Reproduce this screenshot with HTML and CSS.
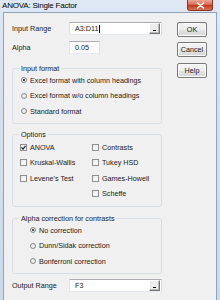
FILE: index.html
```html
<!DOCTYPE html>
<html>
<head>
<meta charset="utf-8">
<link rel="stylesheet" href="styles.css">
</head>
<body>
<div class="window">
  <div class="titlebar">
    <span class="title">ANOVA: Single Factor</span>
    <span class="close"><svg width="9" height="7" viewBox="0 0 9 7"><path d="M1.5 1 L7.5 6 M7.5 1 L1.5 6" stroke="#fff" stroke-width="1.6" stroke-linecap="round"/></svg></span>
  </div>
  <div class="client">
    <div class="form">
      <div class="field-row first">
        <label class="field-label" for="in-range">Input Range</label>
        <div class="range-box" id="in-range"><span class="box-text">A3:D11</span><span class="caret"></span><span class="pick-btn"><span class="dash"></span></span></div>
      </div>
      <div class="field-row alpha">
        <label class="field-label" for="alpha">Alpha</label>
        <div class="text-box" id="alpha"><span class="box-text">0.05</span></div>
      </div>
      <fieldset class="group format">
        <legend>Input format</legend>
        <div class="opts">
          <div class="opt"><span class="radio checked"></span>Excel format with column headings</div>
          <div class="opt"><span class="radio"></span>Excel format w/o column headings</div>
          <div class="opt"><span class="radio"></span>Standard format</div>
        </div>
      </fieldset>
      <fieldset class="group options">
        <legend>Options</legend>
        <div class="opts cols">
          <div class="col left">
            <div class="opt"><span class="check checked"><svg width="5" height="5" viewBox="0 0 5 5"><path d="M0.5 2.5 L2 4 L4.5 0.8" fill="none" stroke="#222" stroke-width="1.2"/></svg></span>ANOVA</div>
            <div class="opt"><span class="check"></span>Kruskal-Wallis</div>
            <div class="opt"><span class="check"></span>Levene's Test</div>
          </div>
          <div class="col">
            <div class="opt"><span class="check"></span>Contrasts</div>
            <div class="opt"><span class="check"></span>Tukey HSD</div>
            <div class="opt"><span class="check"></span>Games-Howell</div>
            <div class="opt"><span class="check"></span>Scheffe</div>
          </div>
        </div>
      </fieldset>
      <fieldset class="group correction">
        <legend>Alpha correction for contrasts</legend>
        <div class="opts indent">
          <div class="opt"><span class="radio checked"></span>No correction</div>
          <div class="opt"><span class="radio"></span>Dunn/Sidak correction</div>
          <div class="opt"><span class="radio"></span>Bonferroni correction</div>
        </div>
      </fieldset>
      <div class="field-row output">
        <label class="field-label" for="out-range">Output Range</label>
        <div class="range-box" id="out-range"><span class="box-text">F3</span><span class="pick-btn"><span class="dash"></span></span></div>
      </div>
    </div>
    <div class="buttons">
      <button class="btn">OK</button>
      <button class="btn">Cancel</button>
      <button class="btn help">Help</button>
    </div>
  </div>
</div>
</body>
</html>
```
FILE: styles.css
```css
* { box-sizing: border-box; }
html, body { margin: 0; padding: 0; }
body {
  width: 220px;
  height: 300px;
  overflow: hidden;
  font-family: "Liberation Sans", Arial, sans-serif;
  font-size: 7.2px;
  color: #1a1a1a;
}
.window {
  width: 220px;
  height: 300px;
  background: linear-gradient(#dde8f4, #d2dfee 40%, #cbdaeb);
  display: flex;
  flex-direction: column;
  padding: 0 3px;
}
.titlebar {
  height: 12px;
  flex: none;
  display: flex;
  justify-content: space-between;
  align-items: flex-start;
  margin: 0 -3px;
  padding: 0 7px 0 2px;
}
.title {
  font-size: 8px;
  letter-spacing: -0.2px;
  line-height: 12px;
  color: #000;
}
.close {
  width: 26px;
  height: 11px;
  display: flex;
  align-items: center;
  justify-content: center;
  background: linear-gradient(#eaa996, #d86a50 45%, #c4391c 55%, #d9755a);
  border: 1px solid #8e3424;
  border-top: none;
  border-radius: 0 0 3px 3px;
}
.client {
  flex: 1;
  display: flex;
  background: #f0f0f0;
  border: 1px solid #8fa3bb;
  border-bottom: none;
  padding-left: 8px;
}
.form {
  width: 150px;
  padding-top: 9px;
  display: flex;
  flex-direction: column;
}
.field-row {
  display: flex;
  align-items: center;
  height: 13px;
}
.field-row.alpha { margin-top: 6px; }
.field-row.output { margin-top: 5px; }
.field-label {
  display: block;
  width: 57px;
  flex: none;
  line-height: 9px;
  color: #1a1a1a;
}
.range-box, .text-box {
  height: 13px;
  background: #fff;
  border: 1px solid #abadb3;
  border-color: #abadb3 #dbdfe6 #e3e9ef #e2e3ea;
  display: flex;
  align-items: center;
  padding-left: 5px;
}
.range-box { width: 93px; padding-right: 1px; }
.text-box { width: 31px; }
.box-text { line-height: 9px; }
.caret {
  width: 1px;
  height: 8px;
  background: #000;
  margin-left: 1px;
}
.pick-btn {
  margin-left: auto;
  width: 11px;
  height: 11px;
  background: #ececec;
  border: 1px solid;
  border-color: #fdfdfd #777 #777 #fdfdfd;
  box-shadow: inset -1px -1px 0 #b5b5b5;
  display: flex;
  justify-content: center;
  align-items: flex-end;
  padding-bottom: 2px;
}
.dash {
  width: 3px;
  height: 1px;
  background: #000;
}
.group {
  margin: 0;
  min-width: 0;
  border: 1px solid #d5dfe5;
  border-radius: 3px;
  padding: 0 0 4px 0;
}
.group legend {
  margin-left: 6px;
  padding: 0 2px;
  line-height: 9px;
  font-size: 7.2px;
}
.group.format { margin-top: 9.5px; }
.group.options { margin-top: 5.5px; }
.group.options .opts { padding-top: 1px; }
.group.correction { margin-top: 7px; }
.opts { padding-left: 8px; }
.opts.cols { display: flex; padding-left: 7px; }
.opts.indent { padding-left: 17px; }
.col.left { width: 72px; }
.opt {
  display: flex;
  align-items: center;
  height: 15.5px;
}
.radio {
  width: 6px;
  height: 6px;
  flex: none;
  border-radius: 50%;
  border: 1px solid #8b8b8b;
  background: radial-gradient(circle, #f6f6f6, #dcdcdc);
  margin-right: 3px;
  display: flex;
  align-items: center;
  justify-content: center;
}
.radio.checked::after {
  content: "";
  width: 2px;
  height: 2px;
  border-radius: 50%;
  background: #1d1d1d;
}
.check {
  width: 7px;
  height: 7px;
  flex: none;
  border: 1px solid #8e8f8f;
  background: linear-gradient(135deg, #e9e9e9, #fff);
  margin-right: 3px;
  display: flex;
  align-items: center;
  justify-content: center;
}
.buttons {
  margin-left: 15px;
  padding-top: 9px;
  display: flex;
  flex-direction: column;
  gap: 5px;
}
.btn {
  width: 30px;
  height: 15px;
  padding: 0;
  font-family: inherit;
  font-size: 7.2px;
  color: #1a1a1a;
  border: 1px solid #7a7a7a;
  border-radius: 2px;
  background: linear-gradient(#f5f5f5, #ededed 50%, #e2e2e2 51%, #d8d8d8);
  box-shadow: inset 0 0 0 1px #fbfbfb;
}
.btn.help { margin-top: 1px; }
```
